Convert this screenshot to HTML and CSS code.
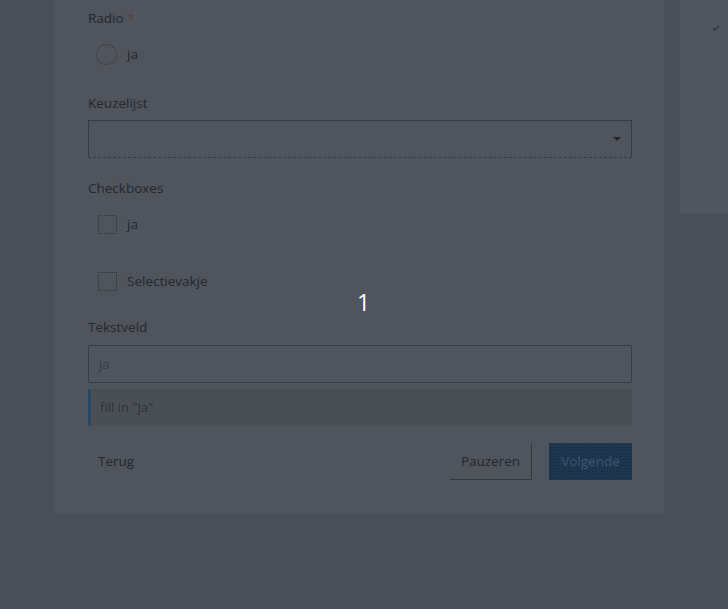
FILE: index.html
```html
<!DOCTYPE html>
<html lang="nl">
<head>
<meta charset="utf-8">
<title>Formulier</title>
<link rel="stylesheet" href="styles.css">
</head>
<body>
<div class="layout">
  <main class="card">
    <div class="field field-radio">
      <div class="label">Radio <span class="req">*</span></div>
      <label class="option"><span class="radio"></span><span>ja</span></label>
    </div>
    <div class="field">
      <div class="label">Keuzelijst</div>
      <div class="select"><span class="caret"></span></div>
    </div>
    <div class="field field-checks">
      <div class="label">Checkboxes</div>
      <label class="option"><span class="check"></span><span>ja</span></label>
      <label class="option option-gap"><span class="check"></span><span>Selectievakje</span></label>
    </div>
    <div class="field field-text">
      <div class="label">Tekstveld</div>
      <div class="input">ja</div>
      <div class="help">fill in "ja"</div>
    </div>
    <div class="actions">
      <span class="back">Terug</span>
      <span class="spacer"></span>
      <span class="btn btn-pause">Pauzeren</span>
      <span class="btn btn-next">Volgende</span>
    </div>
    <div class="step">1</div>
  </main>
  <aside class="side">
    <svg class="tick" width="8" height="6" viewBox="0 0 8 6"><path d="M1 3 L3 5 L7 1" fill="none" stroke="#2c3037" stroke-width="1.2"/></svg>
  </aside>
</div>
</body>
</html>
```
FILE: styles.css
```css
html, body {
  margin: 0;
  padding: 0;
}
body {
  background: #4b4f57;
  font-family: "Open Sans", "Lato", sans-serif;
  font-size: 13.5px;
  color: #23272e;
  height: 609px;
  overflow: hidden;
}
.layout {
  display: flex;
  align-items: flex-start;
}
.card {
  position: relative;
  margin-left: 55px;
  width: 609px;
  box-sizing: border-box;
  padding: 8px 32px 33px 33px;
  background: #50545c;
}
.side {
  margin-left: 16px;
  width: 48px;
  height: 213px;
  background: #51555d;
  position: relative;
}
.tick {
  position: absolute;
  left: 32px;
  top: 25px;
}
.label {
  line-height: 20px;
  height: 20px;
}
.req {
  color: #5b3d3a;
}
.field {
  margin-bottom: 20px;
}
.field-radio {
  margin-bottom: 21px;
}
.field-checks {
  margin-bottom: 18px;
}
.option {
  display: flex;
  align-items: center;
  height: 36px;
  margin-top: 8px;
  padding-left: 9px;
}
.option-gap {
  margin-top: 21px;
}
.radio {
  width: 21px;
  height: 21px;
  margin-left: -1px;
  margin-right: 10px;
  border-radius: 50%;
  border: 1px dotted #2e3239;
  box-sizing: border-box;
}
.check {
  width: 19px;
  height: 19px;
  margin-left: 1px;
  margin-right: 10px;
  border: 1px dotted #2e3239;
  box-sizing: border-box;
}
.select {
  margin-top: 7px;
  height: 38px;
  box-sizing: border-box;
  border: 1px solid #363c45;
  border-bottom: 1px dashed #363c45;
  position: relative;
}
.caret {
  position: absolute;
  right: 10px;
  top: 16px;
  width: 0;
  height: 0;
  border-left: 4px solid transparent;
  border-right: 4px solid transparent;
  border-top: 4px solid #23272d;
}
.field-text {
  margin-bottom: 17px;
}
.input {
  margin-top: 8px;
  height: 38px;
  box-sizing: border-box;
  border: 1px solid #363c45;
  padding: 0 10px;
  line-height: 36px;
  font-size: 13px;
  color: #363c44;
}
.help {
  margin-top: 6px;
  height: 37px;
  box-sizing: border-box;
  background: #4a4f56;
  border-left: 3px solid #284866;
  padding-left: 9px;
  line-height: 37px;
  font-size: 13px;
  color: #2c3037;
}
.actions {
  display: flex;
  align-items: stretch;
  height: 37px;
}
.back {
  padding-left: 10px;
  line-height: 37px;
}
.spacer {
  flex: 1;
}
.btn {
  line-height: 37px;
  box-sizing: border-box;
  height: 37px;
  text-align: center;
}
.btn-pause {
  width: 82px;
  border-right: 1px solid #33383f;
  border-bottom: 1px solid #33383f;
}
.btn-next {
  margin-left: 17px;
  width: 83px;
  color: #3d5870;
  background-color: #1e3650;
  background-image: radial-gradient(circle, #132740 0.8px, transparent 1px);
  background-size: 3px 3px;
}
.step {
  position: absolute;
  left: 300px;
  top: 287px;
  width: 17px;
  text-align: center;
  font-family: "Open Sans", sans-serif;
  font-size: 23px;
  line-height: 30px;
  color: #ffffff;
}
```
